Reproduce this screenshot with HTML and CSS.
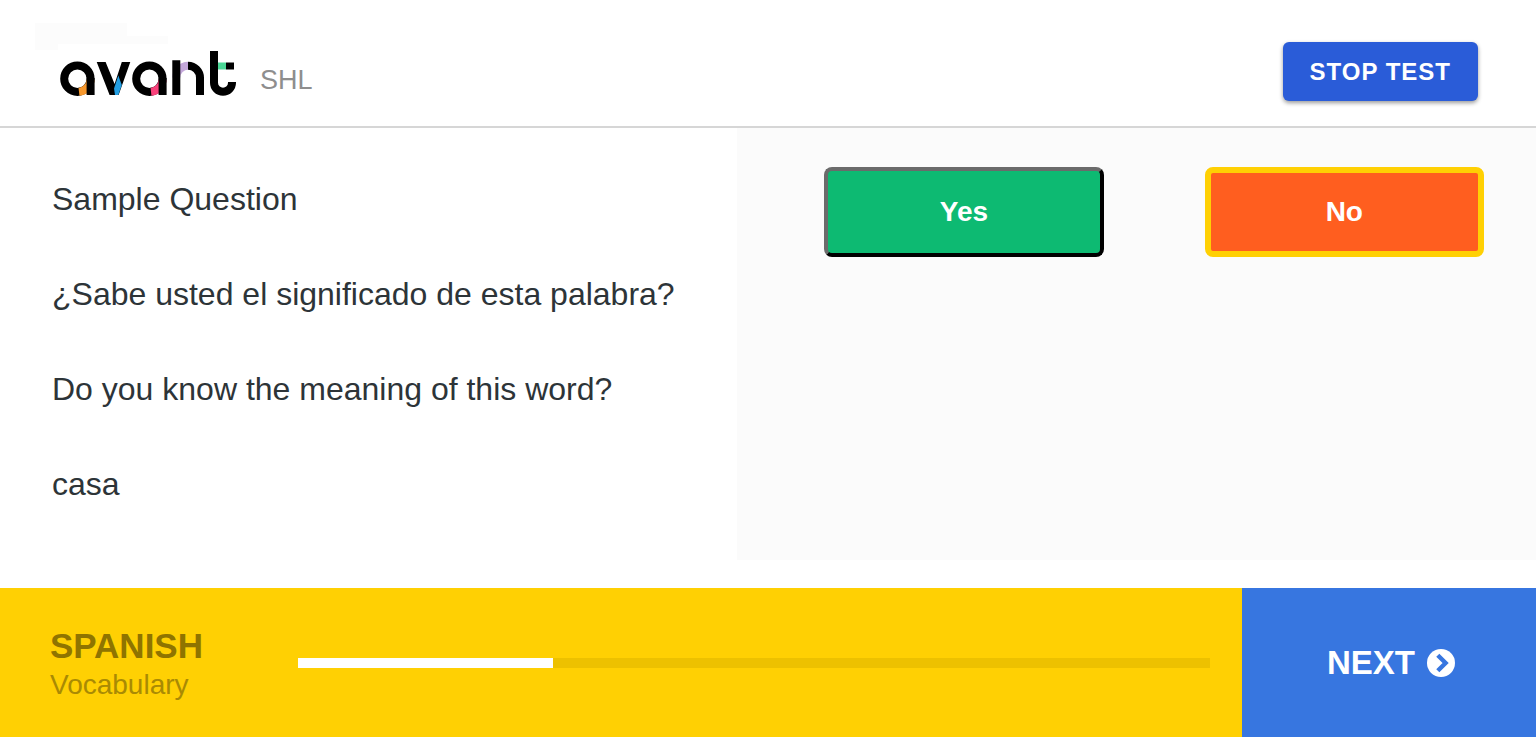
FILE: index.html
```html
<!DOCTYPE html>
<html lang="en">
<head>
    <meta charset="UTF-8">
    <meta name="viewport" content="width=device-width, initial-scale=1.0">
    <title>Avant - Sample Question</title>
    <link rel="stylesheet" href="styles.css">
</head>
<body>

<header class="header">
    <div class="brand">
        <svg class="logo" viewBox="35 23 202 74" width="202" height="74" role="img" aria-label="avant">
            <path d="M35 23H127V36H168V44H58V50H35Z" fill="#fcfcfc"/>
            <g fill="none" stroke="#000" stroke-width="8">
                <!-- a -->
                <circle cx="77.4" cy="78.7" r="13.2"/>
                <path d="M90.6 80A13.2 13.2 0 0 1 79 91.9" stroke="#f7982d"/>
                <path d="M90.6 78V95"/>
                <!-- v -->
                <path d="M96.7 62H105.6L114.6 84L121.8 62H130.3L118.6 95H109.6Z" fill="#000" stroke="none"/>
                <path d="M118.3 75.6L121.8 85L118.3 95H115L114 88.5Z" fill="#239fe3" stroke="none"/>
                <!-- a -->
                <circle cx="149.4" cy="78.7" r="13.2"/>
                <path d="M162.6 80A13.2 13.2 0 0 1 151 91.9" stroke="#f9417b"/>
                <path d="M162.6 78V95"/>
                <!-- n -->
                <path d="M176.3 77.6A11.9 11.9 0 0 1 188.2 65.7" stroke="#c4a8da"/>
                <path d="M188 65.7A12 12 0 0 1 200 77.7V95M176.3 60.3V95"/>
                <!-- t -->
                <path d="M214 51V82.7A9 9 0 0 0 232 82.7V82"/>
                <path d="M218 66H226" stroke="#4bd796" stroke-width="7"/>
                <path d="M226 66H234" stroke-width="7"/>
            </g>
        </svg>
        <span class="client">SHL</span>
    </div>
    <button type="button" class="stop-btn">STOP TEST</button>
</header>

<main class="content">
    <section class="question">
        <p>Sample Question</p>
        <p lang="es">¿Sabe usted el significado de esta palabra?</p>
        <p>Do you know the meaning of this word?</p>
        <p lang="es">casa</p>
    </section>
    <section class="answers">
        <button type="button" class="answer-btn yes-btn">Yes</button>
        <button type="button" class="answer-btn no-btn">No</button>
    </section>
</main>

<footer class="footer">
    <div class="section-info">
        <div class="language">SPANISH</div>
        <div class="section-name">Vocabulary</div>
    </div>
    <progress class="progress" value="28" max="100" aria-label="Test progress"></progress>
    <button type="button" class="next-btn">
        NEXT
        <svg class="next-icon" viewBox="0 0 28 28" width="28" height="28" aria-hidden="true">
            <circle cx="14" cy="14" r="14" fill="#fff"/>
            <path d="M10.8 6.2L18.6 14L10.8 21.8" fill="none" stroke="#3776e0" stroke-width="4.4"/>
        </svg>
    </button>
</footer>

</body>
</html>
```

FILE: styles.css
```css
* {
    box-sizing: border-box;
}

body {
    margin: 0;
    min-height: 100vh;
    display: flex;
    flex-direction: column;
    background-color: #fff;
    color: #2d3438;
    font-family: "Liberation Sans", Arial, sans-serif;
}

button {
    font-family: inherit;
    font-weight: bold;
    color: #fff;
    cursor: pointer;
}

/* Header */
.header {
    display: flex;
    justify-content: space-between;
    align-items: flex-start;
    padding: 23px 58px 25px 35px;
    border-bottom: 2px solid #d6d6d6;
}

.brand {
    display: flex;
    align-items: flex-end;
    gap: 23px;
}

.logo {
    display: block;
}

.client {
    font-size: 27px;
    line-height: 34px;
    color: #8e8e8e;
}

.stop-btn {
    margin-top: 19px;
    padding: 0 27px;
    height: 59px;
    border: none;
    border-radius: 6px;
    background-color: #2a5cd8;
    font-size: 24px;
    letter-spacing: 1px;
    box-shadow: 0 2px 4px rgba(0, 0, 0, 0.4);
}

/* Question and answers */
.content {
    flex: 1;
    display: grid;
    grid-template-columns: 48fr 52fr;
    margin-bottom: 28px;
}

.question {
    padding: 47px 16px 0 52px;
    font-size: 32px;
    line-height: 48px;
}

.question p {
    margin: 0 0 47px;
}

.answers {
    display: grid;
    grid-template-columns: 1fr 1fr;
    align-items: start;
    gap: 101px;
    padding: 39px 52px 0 87px;
    background-color: #fbfbfb;
}

.answer-btn {
    height: 90px;
    border-radius: 8px;
    font-size: 28px;
}

.yes-btn {
    border: 4px solid;
    border-color: #6b6b6b #000 #000 #6b6b6b;
    background-color: #0dba72;
}

.no-btn {
    border: 6px solid #ffd003;
    background-color: #ff5e1f;
}

/* Footer */
.footer {
    display: flex;
    align-items: center;
    height: 149px;
    padding-left: 50px;
    background-color: #ffd003;
}

.section-info {
    width: 248px;
    padding-top: 4px;
}

.language {
    font-size: 35px;
    font-weight: bold;
    line-height: 40px;
    color: #8f7400;
}

.section-name {
    font-size: 28px;
    line-height: 38px;
    color: #a98a04;
}

.progress {
    flex: 1;
    height: 10px;
    margin-right: 32px;
    border: none;
    background-color: #edc100;
    appearance: none;
}

.progress::-webkit-progress-bar {
    background-color: #edc100;
}

.progress::-webkit-progress-value {
    background-color: #fff;
}

.next-btn {
    display: flex;
    justify-content: center;
    align-items: center;
    align-self: stretch;
    gap: 12px;
    width: 294px;
    padding: 0 0 0 4px;
    border: none;
    background-color: #3776e0;
    font-size: 33px;
}
```
